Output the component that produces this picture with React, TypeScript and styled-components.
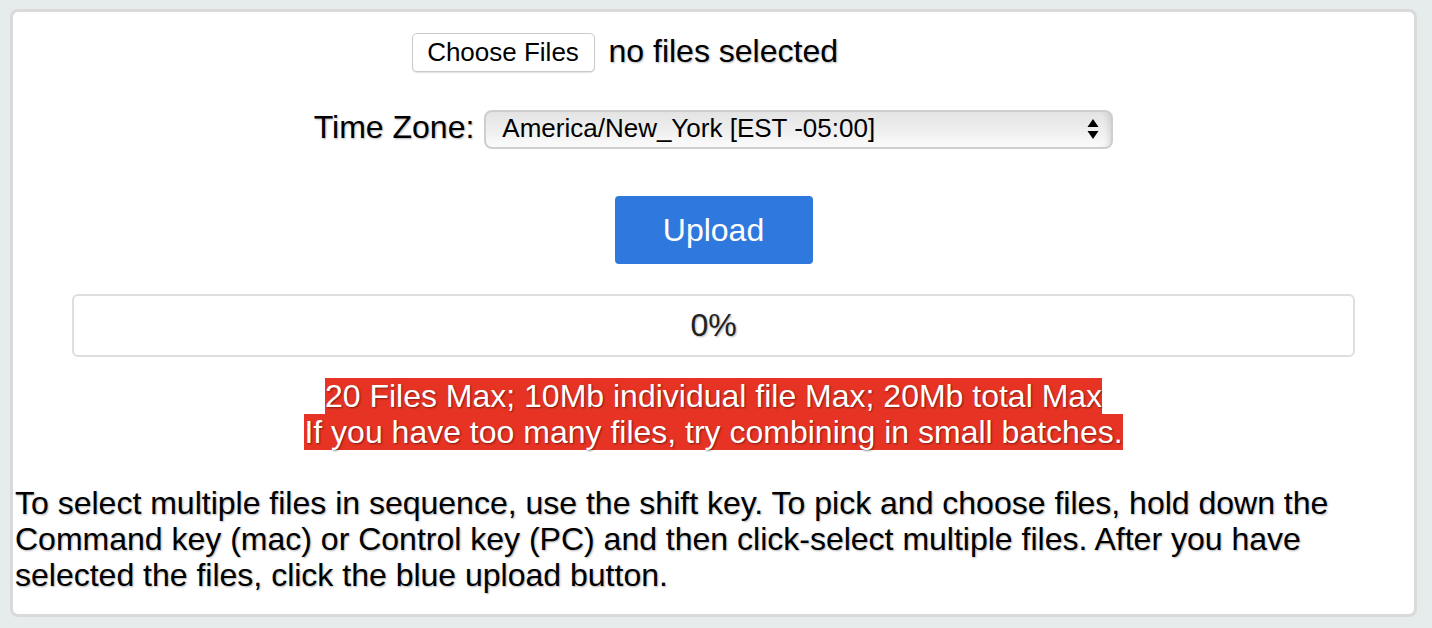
import React from "react";
import styled, { createGlobalStyle } from "styled-components";

const Global = createGlobalStyle`
  html, body { margin: 0; padding: 0; background: #e6ecec; }
  body { font-family: "Liberation Sans", Arial, Helvetica, sans-serif; color: #000; }
`;

const Panel = styled.div`
  margin: 9px 15px 0 10px;
  border: 3px solid #dadada;
  border-radius: 8px;
  background: #fff;
  padding: 21px 2px 21px 2px;
  display: flex;
  flex-direction: column;
  align-items: center;
  text-shadow: 1px 1px 2px rgba(0, 0, 0, 0.3);
`;

const FileRow = styled.div`
  width: 604px;
  height: 39px;
  display: flex;
  align-items: center;
  gap: 14px;
`;

const ChooseButton = styled.button`
  height: 39px;
  width: 183px;
  padding: 0;
  background: #fff;
  border: 1px solid #c9c9c9;
  border-radius: 5px;
  box-shadow: 0 1px 1px rgba(0, 0, 0, 0.12);
  font-family: "Liberation Sans", Arial, sans-serif;
  font-size: 26px;
  color: #000;
  text-shadow: none;
`;

const FileStatus = styled.span`
  font-size: 32px;
  line-height: 32px;
  margin-bottom: 4px;
`;

const ZoneRow = styled.div`
  margin-top: 38px;
  height: 39px;
  display: flex;
  align-items: center;
  gap: 10px;
`;

const ZoneLabel = styled.label`
  font-size: 32px;
  line-height: 32px;
  margin-bottom: 5px;
`;

const SelectWrap = styled.div`
  position: relative;
  width: 629px;
  height: 39px;
`;

const Select = styled.select`
  appearance: none;
  -webkit-appearance: none;
  width: 100%;
  height: 100%;
  box-sizing: border-box;
  border: 2px solid #cecece;
  border-radius: 8px;
  background: linear-gradient(to bottom, #e4e4e4 0%, #efefef 55%, #fbfbfb 100%);
  box-shadow: inset -6px 0 6px -4px rgba(0, 0, 0, 0.12);
  padding: 0 0 4px 16px;
  font-family: "Liberation Sans", Arial, sans-serif;
  font-size: 26px;
  color: #000;
  outline: none;
`;

const Arrows = styled.svg`
  position: absolute;
  right: 14px;
  top: 8px;
  pointer-events: none;
`;

const UploadButton = styled.button`
  margin-top: 47px;
  width: 198px;
  height: 68px;
  border: none;
  border-radius: 4px;
  background: #2f79de;
  color: #fff;
  font-family: "Liberation Sans", Arial, sans-serif;
  font-size: 32px;
  padding: 0;
  text-shadow: none;
`;

const Progress = styled.div`
  margin-top: 30px;
  align-self: stretch;
  margin-left: 57px;
  margin-right: 57px;
  height: 63px;
  box-sizing: border-box;
  border: 2px solid #dedede;
  border-radius: 6px;
  display: flex;
  align-items: center;
  justify-content: center;
  font-size: 32px;
  color: #222;
`;

const Notice = styled.div`
  margin-top: 21px;
  text-align: center;
  font-size: 32px;
  line-height: 36px;
`;

const NoticeText = styled.span`
  background: #e63323;
  color: #fff;
  text-shadow: 1px 1px 2px rgba(0, 0, 0, 0.45);
  box-decoration-break: clone;
  -webkit-box-decoration-break: clone;
`;

const Help = styled.p`
  margin: 35px 0 0 0;
  align-self: stretch;
  font-size: 32px;
  line-height: 36px;
`;

export default function App() {
  return (
    <>
      <Global />
      <Panel>
        <FileRow>
          <ChooseButton type="button">Choose Files</ChooseButton>
          <FileStatus>no files selected</FileStatus>
        </FileRow>
        <ZoneRow>
          <ZoneLabel>Time Zone:</ZoneLabel>
          <SelectWrap>
            <Select defaultValue="ny">
              <option value="ny">America/New_York [EST -05:00]</option>
            </Select>
            <Arrows width="12" height="22" viewBox="0 0 12 22">
              <path d="M6 1 L11.5 9 L0.5 9 Z" fill="#000" />
              <path d="M0.5 13 L11.5 13 L6 21 Z" fill="#000" />
            </Arrows>
          </SelectWrap>
        </ZoneRow>
        <UploadButton type="button">Upload</UploadButton>
        <Progress>0%</Progress>
        <Notice>
          <NoticeText>
            20 Files Max; 10Mb individual file Max; 20Mb total Max
            <br />
            If you have too many files, try combining in small batches.
          </NoticeText>
        </Notice>
        <Help>
          To select multiple files in sequence, use the shift key. To pick and choose files, hold down the
          Command key (mac) or Control key (PC) and then click-select multiple files. After you have
          selected the files, click the blue upload button.
        </Help>
      </Panel>
    </>
  );
}
